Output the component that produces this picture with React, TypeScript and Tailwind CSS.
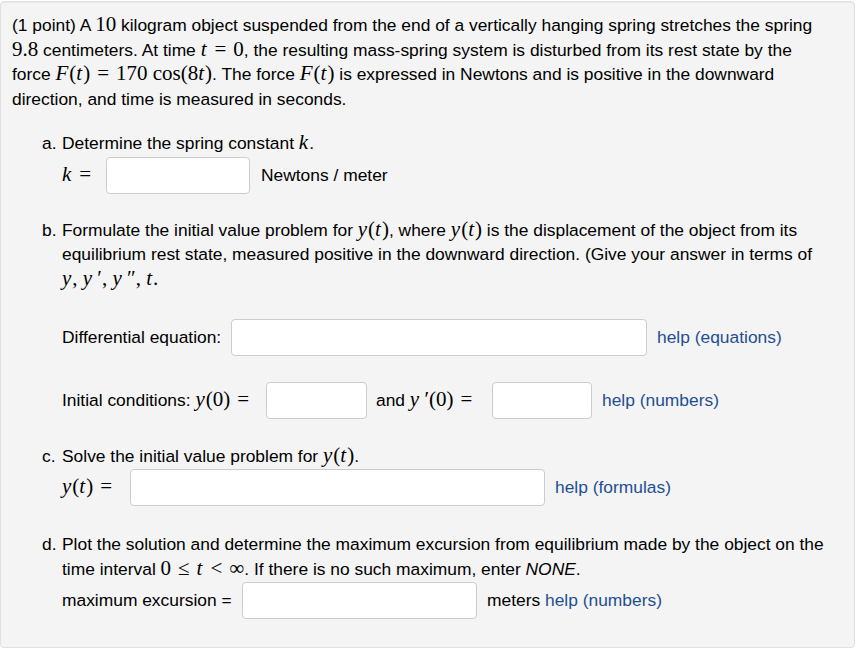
import React from "react";

const M = ({ children }: { children: React.ReactNode }) => (
  <span className="font-['Liberation_Serif',serif] text-[21px] leading-none">{children}</span>
);
const V = ({ children }: { children: React.ReactNode }) => (
  <span className="font-['Liberation_Serif',serif] italic text-[21px] leading-none pr-[1px]">{children}</span>
);
const Eq = () => (
  <span className="font-['Liberation_Serif',serif] text-[21px] leading-none mx-[7px]">=</span>
);
const Op = ({ children }: { children: React.ReactNode }) => (
  <span className="font-['Liberation_Serif',serif] text-[21px] leading-none mx-[7px]">{children}</span>
);

const Box = ({ w }: { w: string }) => (
  <div className={`${w} h-[37px] bg-white border border-[#cccccc] rounded-[4px] shrink-0`} />
);

const Help = ({ children }: { children: React.ReactNode }) => (
  <span className="text-[#1f4f93] whitespace-nowrap">{children}</span>
);

const Line = ({ children, cls = "" }: { children: React.ReactNode; cls?: string }) => (
  <div className={`h-[24.5px] flex items-center whitespace-nowrap ${cls}`}>
    <span>{children}</span>
  </div>
);

export default function App() {
  return (
    <div className="w-[857px] h-[653px] bg-white font-['Liberation_Sans',Arial,sans-serif] text-[17.4px] text-black">
      <div className="mt-[1px] w-[855px] h-[647px] bg-[#f4f4f4] border border-[#e1e1e1] rounded-[4px] shadow-[inset_0_1px_1px_rgba(0,0,0,0.05)] pl-[11px] pt-[11px]">
        {/* Intro paragraph */}
        <div>
          <Line>
            (1 point) A <M>10</M> kilogram object suspended from the end of a vertically hanging spring stretches the spring
          </Line>
          <Line>
            <M>9.8</M> centimeters. At time <V>t</V>
            <Eq />
            <M>0</M>, the resulting mass-spring system is disturbed from its rest state by the
          </Line>
          <Line>
            force <V>F</V>
            <M>(</M>
            <V>t</V>
            <M>)</M>
            <Eq />
            <M>170 cos(8</M>
            <V>t</V>
            <M>)</M>. The force <V>F</V>
            <M>(</M>
            <V>t</V>
            <M>)</M> is expressed in Newtons and is positive in the downward
          </Line>
          <Line>direction, and time is measured in seconds.</Line>
        </div>

        {/* a */}
        <div className="mt-[20px] ml-[30px]">
          <div className="flex">
            <div className="w-[20px] h-[24.5px] flex items-center">a.</div>
            <div>
              <Line>
                Determine the spring constant <V>k</V>.
              </Line>
              <div className="mt-[1px] h-[37px] flex items-center">
                <div className="w-[44px] whitespace-nowrap">
                  <V>k</V>
                  <Eq />
                </div>
                <Box w="w-[144px]" />
                <span className="ml-[11px]">Newtons / meter</span>
              </div>
            </div>
          </div>

          {/* b */}
          <div className="flex mt-[24px]">
            <div className="w-[20px] h-[24.5px] flex items-center">b.</div>
            <div>
              <Line>
                Formulate the initial value problem for <V>y</V>
                <M>(</M>
                <V>t</V>
                <M>)</M>, where <V>y</V>
                <M>(</M>
                <V>t</V>
                <M>)</M> is the displacement of the object from its
              </Line>
              <Line>equilibrium rest state, measured positive in the downward direction. (Give your answer in terms of</Line>
              <Line cls="h-[26px]">
                <V>y</V>
                <M>, </M>
                <V>y</V>
                <M>&thinsp;′, </M>
                <V>y</V>
                <M>&thinsp;″, </M>
                <V>t</V>
                <M>.</M>
              </Line>
              <div className="mt-[26px] h-[37px] flex items-center">
                <div className="w-[169px] whitespace-nowrap">Differential equation:</div>
                <Box w="w-[416px]" />
                <span className="ml-[10px]">
                  <Help>help (equations)</Help>
                </span>
              </div>
              <div className="mt-[26px] h-[37px] flex items-center">
                <div className="w-[204px] whitespace-nowrap">
                  Initial conditions: <V>y</V>
                  <M>(0)</M>
                  <Eq />
                </div>
                <Box w="w-[101px]" />
                <div className="ml-[9px] w-[116px] whitespace-nowrap">
                  and <V>y</V>
                  <M>&thinsp;′(0)</M>
                  <Eq />
                </div>
                <Box w="w-[100px]" />
                <span className="ml-[10px]">
                  <Help>help (numbers)</Help>
                </span>
              </div>
            </div>
          </div>

          {/* c */}
          <div className="flex mt-[25px]">
            <div className="w-[20px] h-[24.5px] flex items-center">c.</div>
            <div>
              <Line>
                Solve the initial value problem for <V>y</V>
                <M>(</M>
                <V>t</V>
                <M>)</M>.
              </Line>
              <div className="mt-[1px] h-[37px] flex items-center">
                <div className="w-[68px] whitespace-nowrap">
                  <V>y</V>
                  <M>(</M>
                  <V>t</V>
                  <M>)</M>
                  <Eq />
                </div>
                <Box w="w-[415px]" />
                <span className="ml-[10px]">
                  <Help>help (formulas)</Help>
                </span>
              </div>
            </div>
          </div>

          {/* d */}
          <div className="flex mt-[26px]">
            <div className="w-[20px] h-[24.5px] flex items-center">d.</div>
            <div>
              <Line>Plot the solution and determine the maximum excursion from equilibrium made by the object on the</Line>
              <Line>
                time interval <M>0</M>
                <Op>≤</Op>
                <V>t</V>
                <Op>&lt;</Op>
                <M>∞</M>. If there is no such maximum, enter <i>NONE</i>.
              </Line>
              <div className="mt-[1px] h-[37px] flex items-center">
                <div className="w-[180px] whitespace-nowrap">maximum excursion =</div>
                <Box w="w-[235px]" />
                <span className="ml-[10px] whitespace-nowrap">
                  meters <Help>help (numbers)</Help>
                </span>
              </div>
            </div>
          </div>
        </div>
      </div>
    </div>
  );
}
